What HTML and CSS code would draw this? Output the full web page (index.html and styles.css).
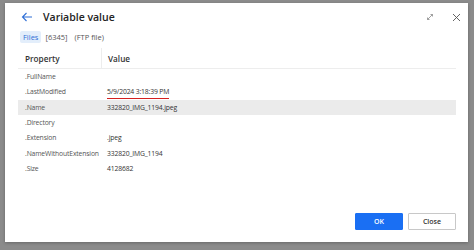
FILE: index.html
```html
<!DOCTYPE html>
<html lang="en">
<head>
    <meta charset="UTF-8">
    <meta name="viewport" content="width=device-width, initial-scale=1.0">
    <title>Variable value</title>
    <link rel="stylesheet" href="styles.css">
</head>
<body>
    <div class="dialog">
        <div class="header">
            <svg class="back" width="12" height="10" viewBox="0 0 12 10">
                <path d="M11 5H1.5M5.5 1L1.5 5l4 4" fill="none" stroke="#2f6fd6" stroke-width="1.1"/>
            </svg>
            <h1>Variable value</h1>
            <div class="tools">
                <svg width="8" height="8" viewBox="0 0 8 8">
                    <path d="M1.5 6.5L6.5 1.5M4.5 1.5h2v2M1.5 4.5v2h2" fill="none" stroke="#888" stroke-width="0.8"/>
                </svg>
                <svg width="9" height="9" viewBox="0 0 9 9">
                    <path d="M1 1l7 7M8 1L1 8" fill="none" stroke="#555" stroke-width="0.9"/>
                </svg>
            </div>
        </div>
        <div class="crumbs">
            <span class="chip">Files</span>
            <span>[6345]</span>
            <span class="type">(FTP file)</span>
        </div>
        <div class="table">
            <div class="row head">
                <div class="cell prop">Property</div>
                <div class="cell val">Value</div>
            </div>
            <div class="row">
                <div class="cell prop">.FullName</div>
                <div class="cell val"></div>
            </div>
            <div class="row">
                <div class="cell prop">.LastModified</div>
                <div class="cell val"><span class="mark">5/9/2024 3:18:39 PM</span></div>
            </div>
            <div class="row selected">
                <div class="cell prop">.Name</div>
                <div class="cell val">332820_IMG_1194.jpeg</div>
            </div>
            <div class="row">
                <div class="cell prop">.Directory</div>
                <div class="cell val"></div>
            </div>
            <div class="row">
                <div class="cell prop">.Extension</div>
                <div class="cell val">.jpeg</div>
            </div>
            <div class="row">
                <div class="cell prop">.NameWithoutExtension</div>
                <div class="cell val">332820_IMG_1194</div>
            </div>
            <div class="row">
                <div class="cell prop">.Size</div>
                <div class="cell val">4128682</div>
            </div>
        </div>
        <div class="footer">
            <button class="btn primary">OK</button>
            <button class="btn">Close</button>
        </div>
    </div>
</body>
</html>
```

FILE: styles.css
```css
body {
    margin: 0;
    padding: 3px 6px 8px 5px;
    background-color: #8b8b8b;
    font-family: "Open Sans", "Noto Sans", sans-serif;
    color: #242424;
}
.dialog {
    height: 239px;
    background-color: white;
    box-shadow: 0 1px 3px rgba(0, 0, 0, 0.25);
    display: flex;
    flex-direction: column;
    padding: 0 12px 0 13px;
    box-sizing: border-box;
}
.header {
    display: flex;
    align-items: center;
    height: 28px;
    padding-left: 3px;
}
.header h1 {
    font-size: 10.5px;
    font-weight: 600;
    margin: 0 0 0 10px;
    color: #242424;
}
.tools {
    margin-left: auto;
    display: flex;
    align-items: center;
    gap: 18px;
    margin-right: -5px;
}
.crumbs {
    display: flex;
    align-items: center;
    gap: 4px;
    font-size: 7.5px;
    color: #555;
    height: 12px;
    margin-left: 2px;
}
.chip {
    background-color: #e3eefb;
    color: #2f6fd6;
    padding: 1px 3px;
    border-radius: 2px;
}
.type {
    margin-left: 3px;
}
.table {
    margin-top: 5px;
    font-size: 6.8px;
    letter-spacing: -0.15px;
    color: #444;
}
.row {
    display: flex;
    height: 15.3px;
    align-items: center;
}
.row.head {
    height: 20px;
    border-bottom: 1px solid #ededed;
    font-size: 8.2px;
    font-weight: 600;
    letter-spacing: 0;
    color: #333;
}
.row.selected {
    background-color: #ebebeb;
}
.cell.prop {
    width: 76px;
    padding-left: 7px;
    color: #555;
}
.row.head .cell.prop {
    color: #333;
    border-right: 1px solid #ededed;
    height: 20px;
    display: flex;
    align-items: center;
}
.cell.val {
    padding-left: 6px;
    color: #333;
}
.mark {
    border-bottom: 1px solid #d42020;
    padding-bottom: 2px;
}
.footer {
    margin-top: auto;
    margin-bottom: 12px;
    display: flex;
    justify-content: flex-end;
    gap: 5px;
}
.btn {
    width: 48px;
    height: 17px;
    font-family: "Open Sans", "Noto Sans", sans-serif;
    font-size: 7px;
    font-weight: 600;
    border: 1px solid #c8c8c8;
    background-color: white;
    color: #333;
    border-radius: 1px;
    padding: 0;
}
.btn.primary {
    background-color: #1a6ff3;
    border-color: #1a6ff3;
    color: white;
}
```
